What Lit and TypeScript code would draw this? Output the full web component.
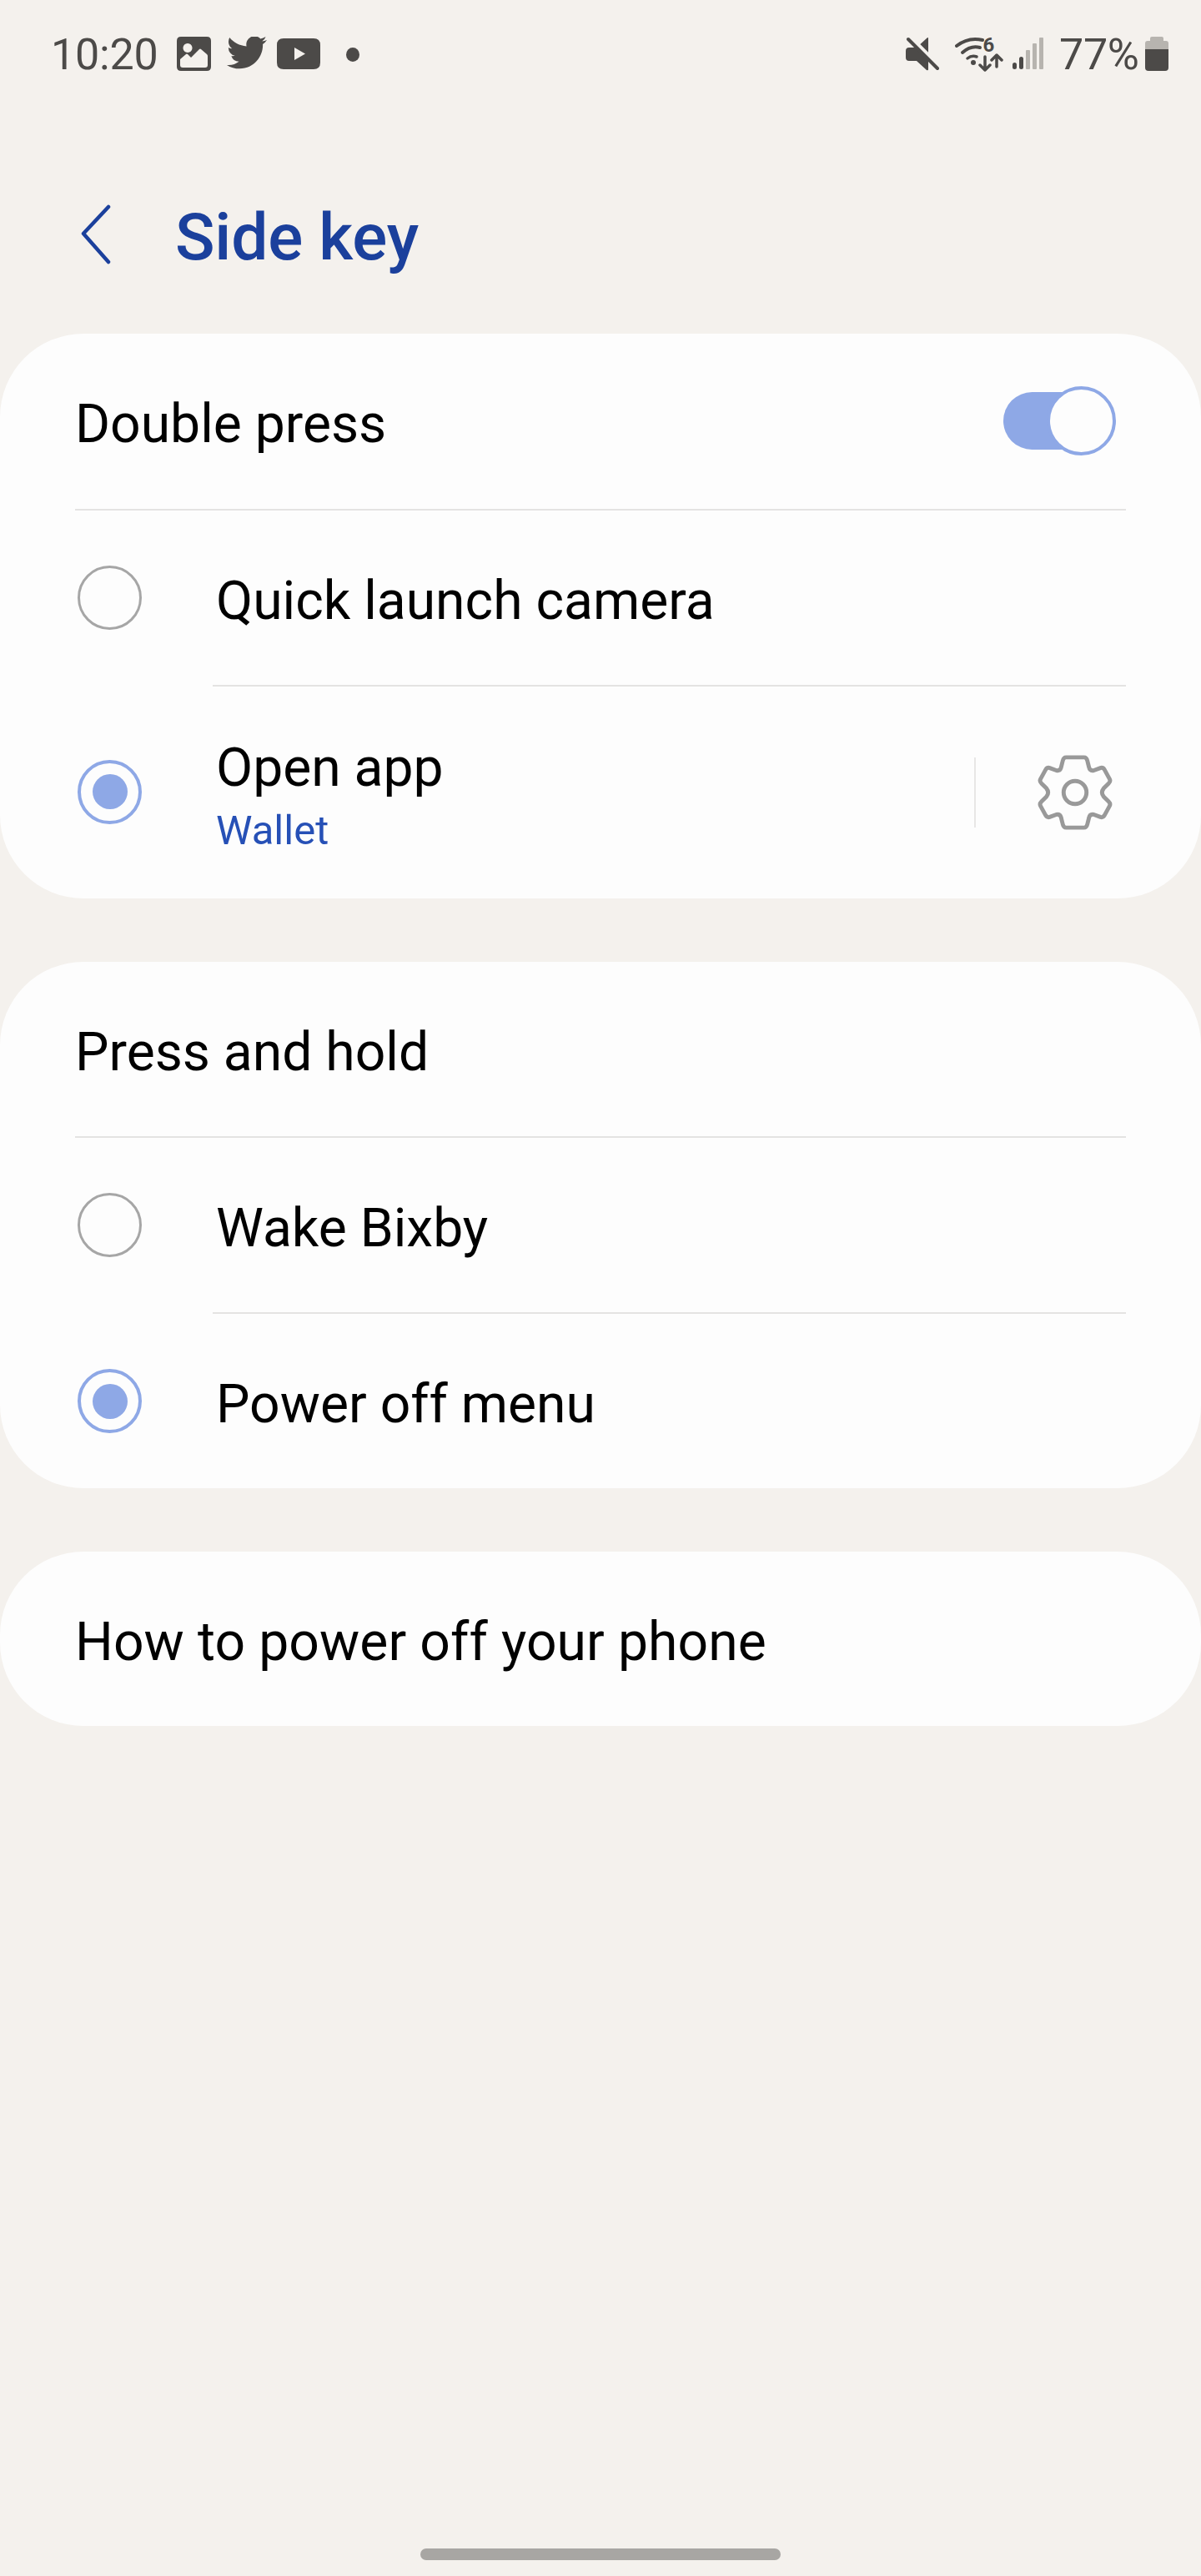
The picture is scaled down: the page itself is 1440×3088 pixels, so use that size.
import { LitElement, html, css, svg } from "lit";
import { customElement } from "lit/decorators.js";

const gear = "M-11,-43 L11,-43 Q14,-43 15,-39 L17,-31 Q18,-26 23,-27 L31,-30 Q34,-31 36,-28 L42,-17 Q44,-14 41,-11 L35,-5 Q31,0 35,5 L41,11 Q44,14 42,17 L36,28 Q34,31 31,30 L23,27 Q18,26 17,31 L15,39 Q14,43 11,43 L-11,43 Q-14,43 -15,39 L-17,31 Q-18,26 -23,27 L-31,30 Q-34,31 -36,28 L-42,17 Q-44,14 -41,11 L-35,5 Q-31,0 -35,-5 L-41,-11 Q-44,-14 -42,-17 L-36,-28 Q-34,-31 -31,-30 L-23,-27 Q-18,-26 -17,-31 L-15,-39 Q-14,-43 -11,-43 Z";

@customElement("app-root")
export class AppRoot extends LitElement {
  static styles = css`
    :host { display: block; width: 1440px; height: 3088px; background: #f4f1ed; font-family: Roboto, "Liberation Sans", sans-serif; color: #000; }
    .page { height: 3088px; display: flex; flex-direction: column; box-sizing: border-box; }
    .status { height: 130px; flex: none; display: flex; align-items: flex-start; padding: 44px 39px 0 61px; box-sizing: border-box; color: #4c4a48; }
    .time { font-size: 52px; line-height: 43px; width: 151px; flex: none; letter-spacing: -0.2px; }
    .status svg { display: block; flex: none; fill: #4c4a48; }
    .img { width: 41px; height: 41px; }
    .tw { width: 48px; height: 41px; margin-left: 19px; }
    .yt { width: 52px; height: 37px; margin: 2px 0 0 12px; }
    .dot { width: 16px; height: 17px; border-radius: 50%; background: #4c4a48; margin: 13px 0 0 31px; flex: none; }
    .spacer { flex: 1; }
    .mute { width: 40px; height: 42px; }
    .wifi { width: 58px; height: 48px; margin: -6px 0 0 19px; }
    .sig { width: 37px; height: 40px; margin-left: 11px; }
    .pct { font-size: 52px; line-height: 43px; margin-left: 19px; width: 103px; flex: none; letter-spacing: -0.3px; }
    .bat { width: 28px; height: 42px; }
    .head { height: 270px; flex: none; display: flex; align-items: flex-start; box-sizing: border-box; padding: 112px 0 0 96px; }
    .chev { width: 40px; height: 72px; flex: none; margin-top: 3px; }
    .title { font-size: 78.5px; font-weight: 500; line-height: 84px; color: #1b409c; margin-left: 74px; letter-spacing: -0.2px; }
    .card { background: #fdfdfd; border-radius: 100px; flex: none; margin-bottom: 76px; }
    .row { display: flex; align-items: center; box-sizing: border-box; height: 209px; font-size: 64.2px; position: relative; }
    .first { height: 210px; }
    .row > .t { margin-top: 6px; }
    .wide { letter-spacing: 0.1px; }
    .hd { padding: 0 90px 0 90px; justify-content: space-between; }
    .opt { padding-left: 93px; }
    .sep { height: 2px; background: #e4e3e2; margin: 0 90px 0 90px; }
    .sep.in { margin-left: 255px; }
    .radio { width: 77px; height: 77px; box-sizing: border-box; border-radius: 50%; border: 3.5px solid #a6a6a6; flex: none; margin-right: 89px; display: flex; align-items: center; justify-content: center; }
    .radio.on { border-color: #8ea8e6; border-width: 4.5px; }
    .radio.on::after { content: ""; width: 42px; height: 42px; border-radius: 50%; background: #8ea8e6; }
    .tall { height: 254px; }
    .tall .radio { margin-top: -2px; }
    .labels { flex: 1; display: flex; flex-direction: column; margin-top: 9px; }
    .main { line-height: 72px; }
    .sub { font-size: 49px; line-height: 58px; color: #2650b6; margin-top: 11px; }
    .vr { width: 2px; height: 84px; background: #e8e7e6; flex: none; }
    .gear { width: 98px; height: 100px; flex: none; margin: 0 102px 0 70px; overflow: visible; }
    .toggle { width: 135px; height: 84px; position: relative; flex: none; margin-right: 12px; }
    .track { position: absolute; left: 0; top: 7px; width: 125px; height: 69px; border-radius: 35px; background: #8ea8e6; }
    .thumb { position: absolute; left: 52px; top: 0; width: 83px; height: 83px; box-sizing: border-box; border-radius: 50%; background: #fdfdfd; border: 4px solid #8ea8e6; }
    .grow { flex: 1; }
    .handle { width: 432px; height: 14px; border-radius: 7px; background: #a8a6a3; align-self: center; margin-bottom: 19px; flex: none; }
  `;

  private radio(on: boolean) {
    return html`<span class="radio ${on ? "on" : ""}"></span>`;
  }

  render() {
    return html`<div class="page">
      <div class="status">
        <span class="time">10:20</span>
        <svg class="img" viewBox="0 0 41 41"><path fill-rule="evenodd" d="M5 0H36Q41 0 41 5V36Q41 41 36 41H5Q0 41 0 36V5Q0 0 5 0ZM4 27V34Q4 37 7 37H34Q37 37 37 34V23Q37 22 36 21L29 15Q28 14 27 15L17 25L13 21Q12 20 11 21ZM13 8a5.5 5.5 0 1 0 .01 0Z"/></svg>
        <svg class="tw" viewBox="0 0 24 20.5"><path transform="translate(0 -2.6)" d="M23.953 4.57a10 10 0 01-2.825.775 4.958 4.958 0 002.163-2.723c-.951.555-2.005.959-3.127 1.184a4.92 4.92 0 00-8.384 4.482C7.69 8.095 4.067 6.13 1.64 3.162a4.822 4.822 0 00-.666 2.475c0 1.71.87 3.213 2.188 4.096a4.904 4.904 0 01-2.228-.616v.06a4.923 4.923 0 003.946 4.827 4.996 4.996 0 01-2.212.085 4.936 4.936 0 004.604 3.417 9.867 9.867 0 01-6.102 2.105c-.39 0-.779-.023-1.17-.067a13.995 13.995 0 007.557 2.209c9.053 0 13.998-7.496 13.998-13.985 0-.21 0-.42-.015-.63A9.935 9.935 0 0024 4.59z"/></svg>
        <svg class="yt" viewBox="0 0 52 37"><path fill-rule="evenodd" d="M8 0H44Q52 0 52 8V29Q52 37 44 37H8Q0 37 0 29V8Q0 0 8 0ZM21 11V26L34 18.5Z"/></svg>
        <span class="dot"></span>
        <span class="spacer"></span>
        <svg class="mute" viewBox="0 0 40 42"><path d="M27 2 V39 Q27 41 25 40 L13 29 H4 Q0 29 0 25 V17 Q0 13 4 13 H13 L25 2 Q27 0 27 2Z"/><path d="M5 1 L40 36" stroke="#f4f1ed" stroke-width="6" fill="none"/><path d="M3 3 L38 38" stroke="#4c4a48" stroke-width="4" stroke-linecap="round" fill="none"/></svg>
        <svg class="wifi" viewBox="0 -6 58 48" style="fill:none">
          <path d="M2 11 Q16 0 33 4" stroke="#4c4a48" stroke-width="4" stroke-linecap="round"/>
          <path d="M9 19 Q19 10 30 13" stroke="#4c4a48" stroke-width="4" stroke-linecap="round"/>
          <path d="M15 26 Q20 22 26 24" stroke="#4c4a48" stroke-width="3.5" stroke-linecap="round"/>
          <circle cx="22" cy="31" r="3" fill="#4c4a48"/>
          <text x="33.5" y="18" font-family="Roboto, sans-serif" font-size="24" font-weight="700" fill="#4c4a48">6</text>
          <path d="M36 24V40M30 34L36 40L42 34M50 36V22M44 28L50 22L56 28" stroke="#4c4a48" stroke-width="3.5" stroke-linecap="round" stroke-linejoin="round"/>
        </svg>
        <svg class="sig" viewBox="0 0 37 40"><rect x="0" y="31" width="5" height="8" rx="2.5"/><rect x="8" y="24" width="5" height="15" rx="2.5"/><rect x="16" y="16" width="5" height="23" rx="1" style="fill:#b7b4af"/><rect x="24" y="8" width="5" height="31" rx="1" style="fill:#b7b4af"/><rect x="32" y="1" width="5" height="38" rx="1" style="fill:#b7b4af"/></svg>
        <span class="pct">77%</span>
        <svg class="bat" viewBox="0 0 28 42"><path style="fill:#b7b4af" d="M8 0H20Q22 0 22 2V5H25Q28 5 28 8V16H0V8Q0 5 3 5H6V2Q6 0 8 0Z"/><path d="M0 15H28V37Q28 41 24 41H4Q0 41 0 37Z"/></svg>
      </div>
      <div class="head">
        <svg class="chev" viewBox="0 0 40 72" fill="none"><path d="M34 3 L4 35 L34 69" stroke="#1b409c" stroke-width="4.5" stroke-linecap="round" stroke-linejoin="round"/></svg>
        <span class="title">Side key</span>
      </div>
      <div class="card">
        <div class="row hd first"><span class="t">Double press</span>
          <span class="toggle"><span class="track"></span><span class="thumb"></span></span></div>
        <div class="sep"></div>
        <div class="row opt">${this.radio(false)}<span class="t">Quick launch camera</span></div>
        <div class="sep in"></div>
        <div class="row opt tall">${this.radio(true)}
          <div class="labels"><span class="main">Open app</span><span class="sub">Wallet</span></div>
          <span class="vr"></span>
          <svg class="gear" viewBox="-50 -50 100 100" preserveAspectRatio="xMidYMid meet" fill="none">${svg`<path d=${gear} stroke="#999" stroke-width="5" stroke-linejoin="round"/><circle r="14" stroke="#999" stroke-width="5"/>`}</svg>
        </div>
      </div>
      <div class="card">
        <div class="row hd"><span class="t">Press and hold</span></div>
        <div class="sep"></div>
        <div class="row opt">${this.radio(false)}<span class="t">Wake Bixby</span></div>
        <div class="sep in"></div>
        <div class="row opt">${this.radio(true)}<span class="t">Power off menu</span></div>
      </div>
      <div class="card">
        <div class="row hd"><span class="t wide">How to power off your phone</span></div>
      </div>
      <div class="grow"></div>
      <div class="handle"></div>
    </div>`;
  }
}
